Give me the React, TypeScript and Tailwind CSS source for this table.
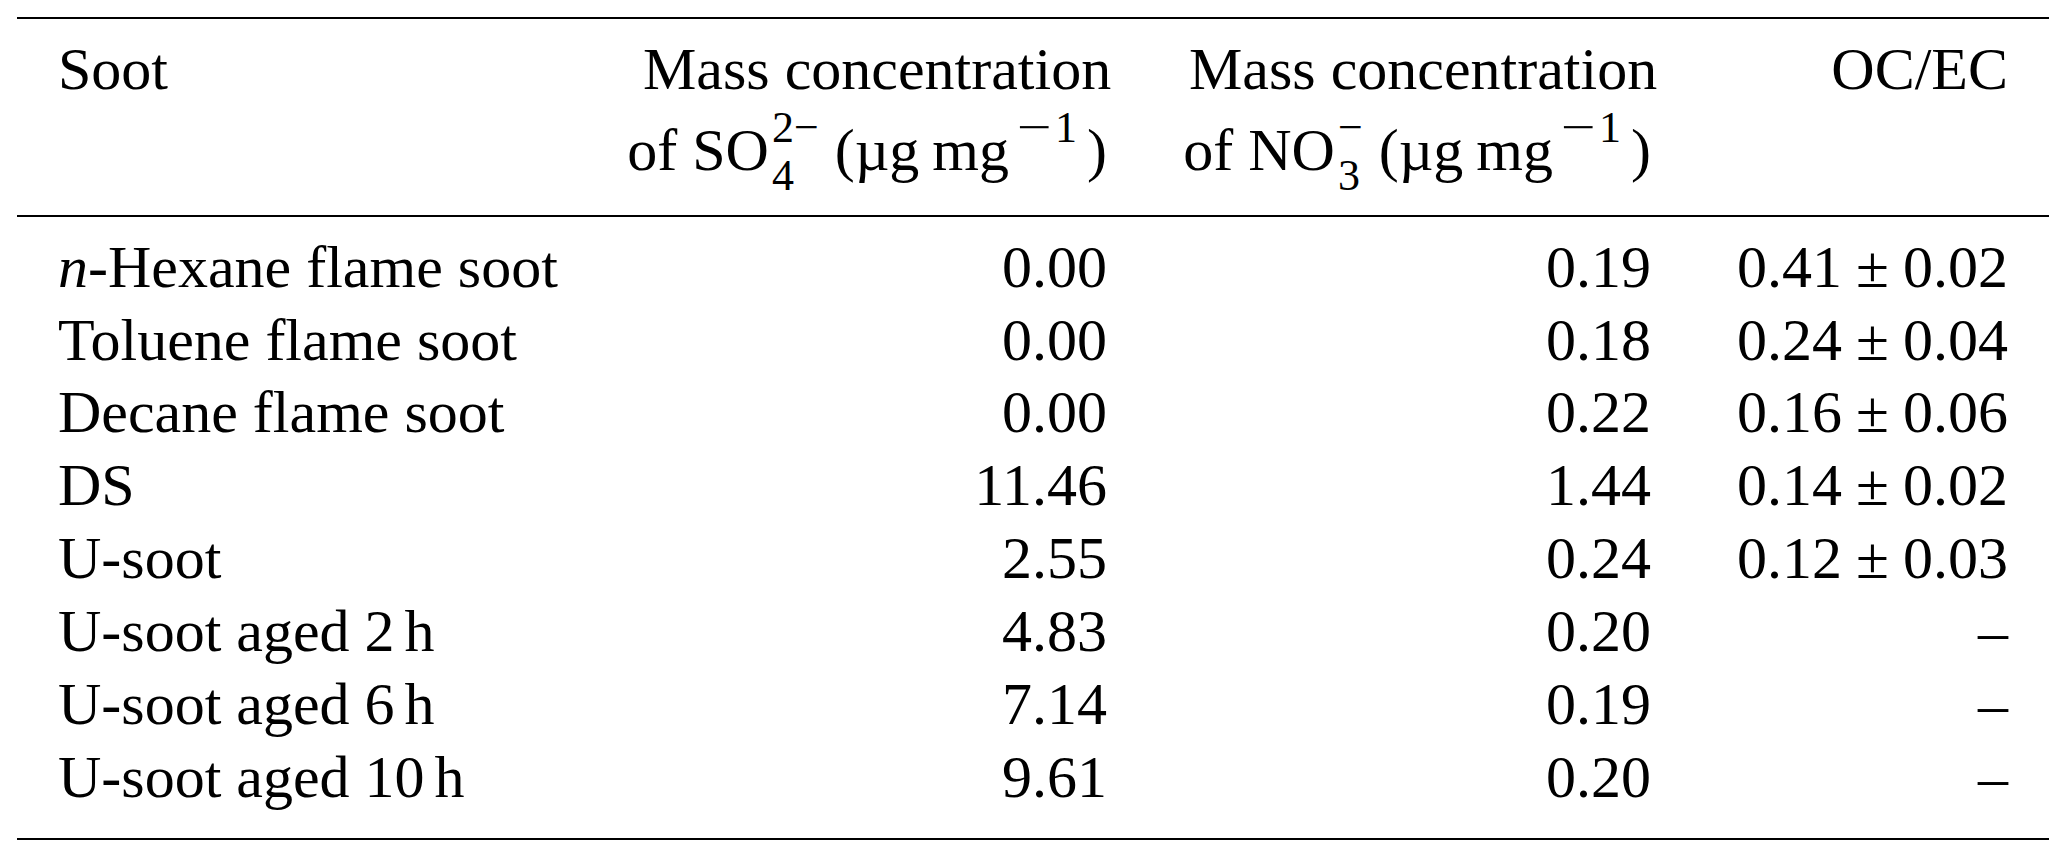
import type { ReactNode } from "react";

type Row = {
  name: ReactNode;
  so4: string;
  no3: string;
  ocec: [string, string] | null;
};

const thin = <span className="inline-block w-[10px]" />;

const rows: Row[] = [
  { name: <><i>n</i>-Hexane flame soot</>, so4: "0.00", no3: "0.19", ocec: ["0.41", "0.02"] },
  { name: "Toluene flame soot", so4: "0.00", no3: "0.18", ocec: ["0.24", "0.04"] },
  { name: "Decane flame soot", so4: "0.00", no3: "0.22", ocec: ["0.16", "0.06"] },
  { name: "DS", so4: "11.46", no3: "1.44", ocec: ["0.14", "0.02"] },
  { name: "U-soot", so4: "2.55", no3: "0.24", ocec: ["0.12", "0.03"] },
  { name: <>U-soot aged 2{thin}h</>, so4: "4.83", no3: "0.20", ocec: null },
  { name: <>U-soot aged 6{thin}h</>, so4: "7.14", no3: "0.19", ocec: null },
  { name: <>U-soot aged 10{thin}h</>, so4: "9.61", no3: "0.20", ocec: null },
];

// stacked sub/superscript, like SO_4^{2-}
function Scripts({ sub, sup }: { sub: string; sup: string }) {
  return (
    <>
      <span className="ml-[3px] text-[44px] leading-[0] align-[-20px]">{sub}</span>
      <span className="-ml-[22px] text-[44px] leading-[0] align-[28px]">{sup}</span>
    </>
  );
}

function Unit() {
  return (
    <>
      <span className="ml-[16px]">(µg</span>
      <span className="inline-block w-[13px]" />
      <span>mg</span>
      <span className="ml-[8px] mr-[10px] text-[44px] leading-[0] align-[28px]">
        <span className="inline-block w-[38px] origin-left scale-x-[1.4] text-left">−</span>1
      </span>
      <span>)</span>
    </>
  );
}

const cell = "px-[41px] whitespace-nowrap";

export default function App() {
  return (
    <div className="min-h-screen bg-white pt-[17px] pl-[17px] text-black font-['Liberation_Serif','Times_New_Roman',serif] text-[60px]">
      <div className="w-[2032px] border-t-2 border-black">
        <div className="grid grid-cols-[585px_546px_544px_357px] border-b-2 border-black pt-[14px] pb-[26px] leading-[72.86px]">
          <div className={cell}>Soot</div>
          <div className={`${cell} text-right`}>
            <div>Mass concentration</div>
            <div className="mt-[8px] mb-[2px] flex justify-end">
              <span>
                of SO
                <Scripts sub="4" sup="2−" />
                <Unit />
              </span>
            </div>
          </div>
          <div className={`${cell} text-right`}>
            <div>Mass concentration</div>
            <div className="mt-[8px] mb-[2px] flex justify-end">
              <span>
                of NO
                <Scripts sub="3" sup="−" />
                <Unit />
              </span>
            </div>
          </div>
          <div className={`${cell} text-right`}>OC/EC</div>
        </div>

        <div className="grid grid-cols-[585px_546px_544px_357px] border-b-2 border-black pt-[14px] pb-[24px] leading-[72.86px]">
          {rows.map((r, i) => (
            <div key={i} className="contents">
              <div className={cell}>{r.name}</div>
              <div className={`${cell} text-right`}>{r.so4}</div>
              <div className={`${cell} text-right`}>{r.no3}</div>
              <div className={`${cell} text-right`}>
                {r.ocec ? (
                  <>
                    {r.ocec[0]}
                    <span className="mx-[14px]">±</span>
                    {r.ocec[1]}
                  </>
                ) : (
                  "–"
                )}
              </div>
            </div>
          ))}
        </div>
      </div>
    </div>
  );
}
